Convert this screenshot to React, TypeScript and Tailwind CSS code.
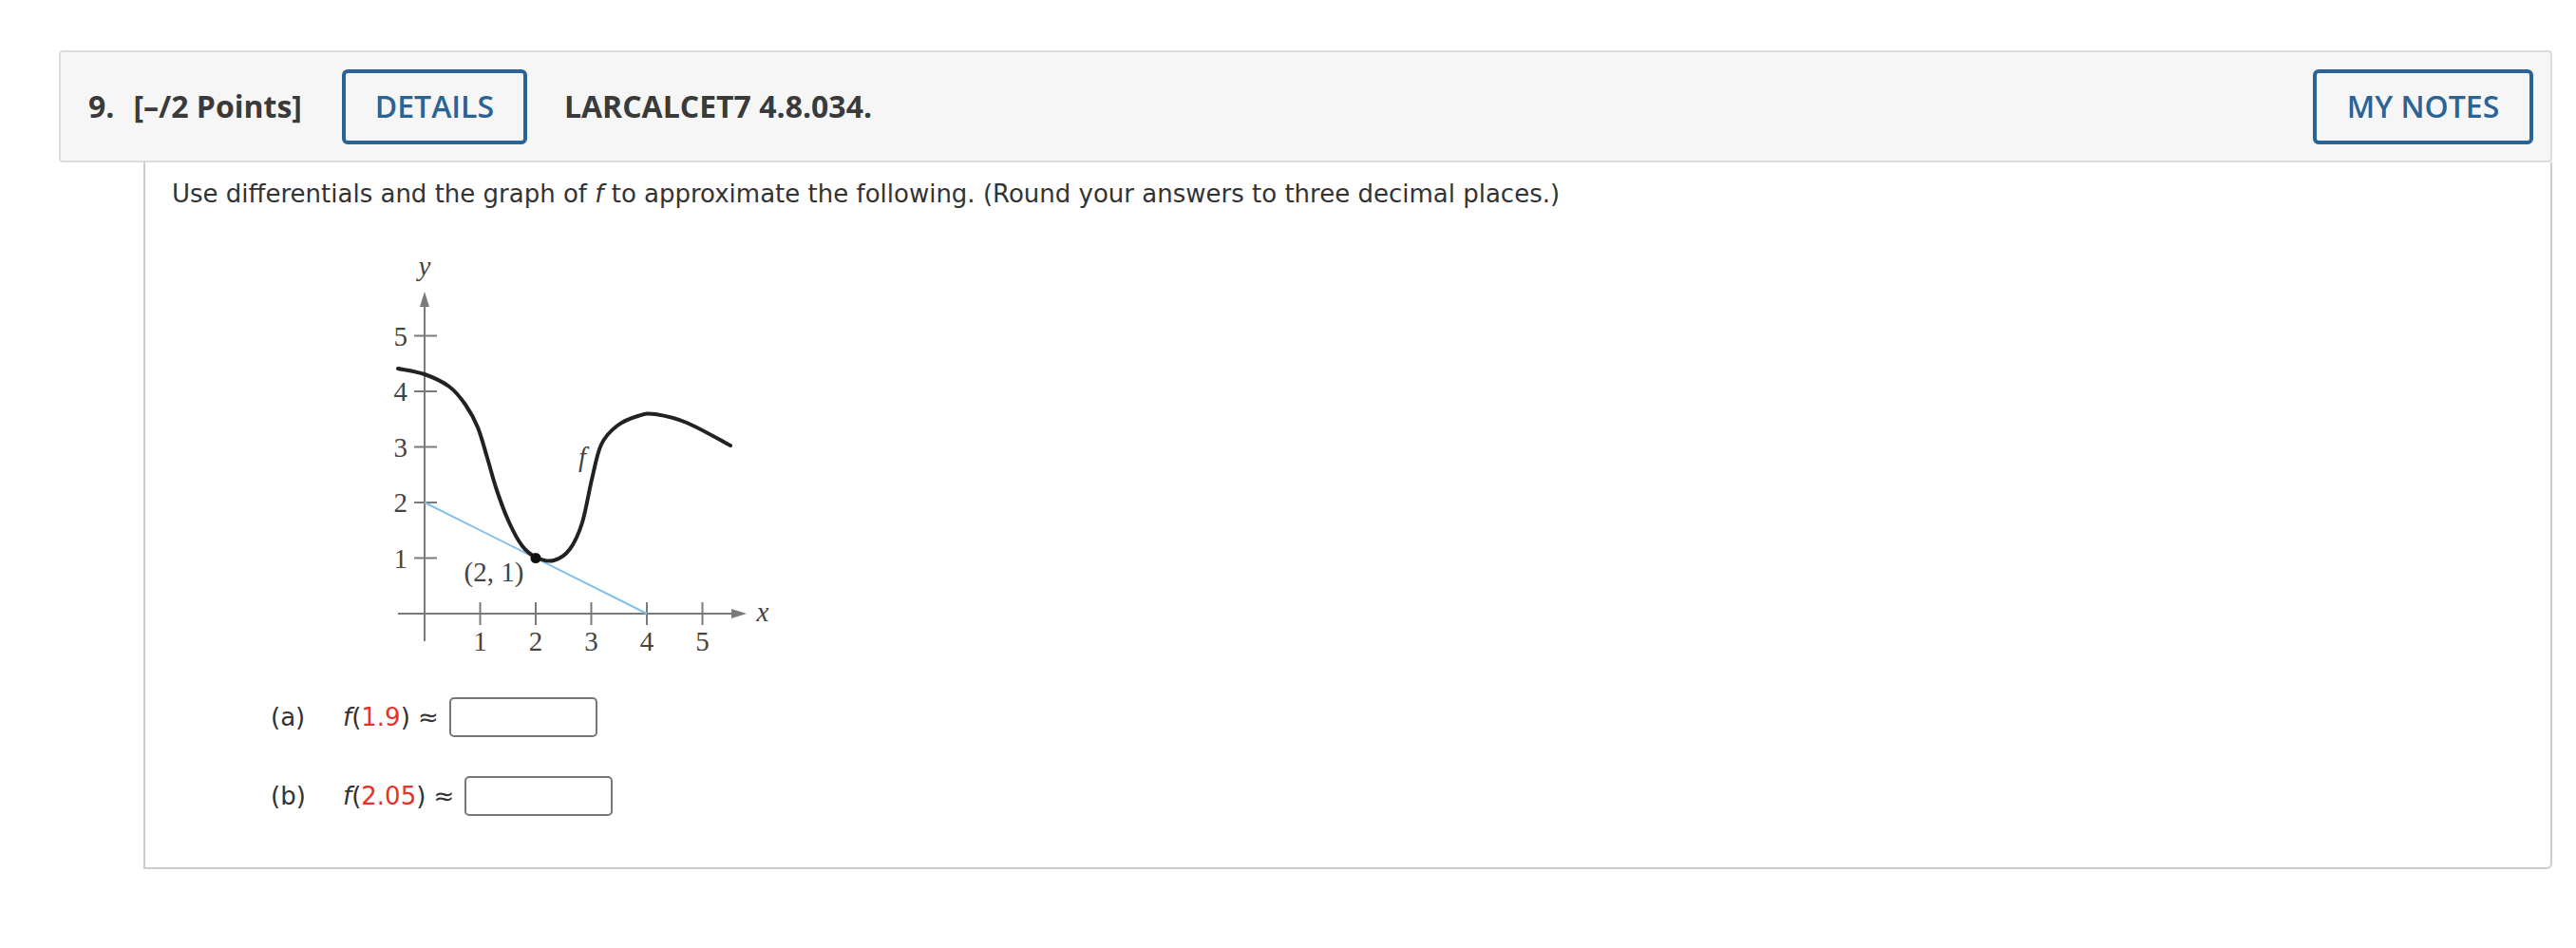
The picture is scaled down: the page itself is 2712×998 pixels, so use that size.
import React from "react";

const curvePts: [number, number][] = [
  [29, 128],
  [57, 134],
  [83, 147],
  [100, 166],
  [113, 190],
  [123, 222],
  [133, 256],
  [146, 290],
  [160, 315],
  [175, 327],
  [193, 330],
  [210, 318],
  [223, 290],
  [233, 245],
  [243, 208],
  [260, 188],
  [283, 177.5],
  [300, 176],
  [333, 185],
  [379, 209],
];

function smoothPath(pts: [number, number][]) {
  let d = `M${pts[0][0]},${pts[0][1]}`;
  for (let i = 0; i < pts.length - 1; i++) {
    const p0 = pts[i - 1] || pts[i];
    const p1 = pts[i];
    const p2 = pts[i + 1];
    const p3 = pts[i + 2] || p2;
    const c1x = p1[0] + (p2[0] - p0[0]) / 6;
    const c1y = p1[1] + (p2[1] - p0[1]) / 6;
    const c2x = p2[0] - (p3[0] - p1[0]) / 6;
    const c2y = p2[1] - (p3[1] - p1[1]) / 6;
    d += ` C${c1x.toFixed(1)},${c1y.toFixed(1)} ${c2x.toFixed(1)},${c2y.toFixed(1)} ${p2[0]},${p2[1]}`;
  }
  return d;
}

const X = (x: number) => 57 + 58.5 * x;
const Y = (y: number) => 386 - 58.5 * y;

function Graph() {
  const ticks = [1, 2, 3, 4, 5];
  return (
    <svg
      width={430}
      height={440}
      className="mt-[41px] ml-[237px] block"
      style={{ fontFamily: '"Liberation Serif", serif' }}
    >
      {/* axes */}
      <line x1={57} y1={60} x2={57} y2={415} stroke="#7a7a7a" strokeWidth={2} />
      <polygon points="57,47 52,63 62,63" fill="#7a7a7a" />
      <line x1={29} y1={386} x2={382} y2={386} stroke="#7a7a7a" strokeWidth={2} />
      <polygon points="396,386 380,381 380,391" fill="#7a7a7a" />
      {ticks.map((t) => (
        <g key={t}>
          <line x1={46} y1={Y(t)} x2={70} y2={Y(t)} stroke="#7a7a7a" strokeWidth={2} />
          <line x1={X(t)} y1={374} x2={X(t)} y2={398} stroke="#7a7a7a" strokeWidth={2} />
          <text x={39} y={Y(t) + 10} fontSize={29} fill="#444" textAnchor="end">
            {t}
          </text>
          <text x={X(t)} y={425} fontSize={29} fill="#444" textAnchor="middle">
            {t}
          </text>
        </g>
      ))}
      <text x={57} y={30} fontSize={29} fill="#444" fontStyle="italic" textAnchor="middle">
        y
      </text>
      <text x={413} y={394} fontSize={29} fill="#444" fontStyle="italic" textAnchor="middle">
        x
      </text>
      {/* tangent line */}
      <line x1={57} y1={Y(2)} x2={X(4)} y2={386} stroke="#84c0ea" strokeWidth={2} />
      {/* curve */}
      <path d={smoothPath(curvePts)} fill="none" stroke="#222" strokeWidth={4} strokeLinecap="round" />
      <circle cx={X(2)} cy={Y(1)} r={5.5} fill="#111" />
      <text x={223} y={231} fontSize={29} fill="#444" fontStyle="italic" textAnchor="middle">
        f
      </text>
      <text x={130} y={352} fontSize={29} fill="#444" textAnchor="middle">
        (2, 1)
      </text>
    </svg>
  );
}

function Answer({ label, arg }: { label: string; arg: string }) {
  return (
    <div className="flex h-[42px] items-center">
      <span className="w-[76px]">{label}</span>
      <span>
        <i>f</i>(<span className="text-[#e8312a]">{arg}</span>) ≈
      </span>
      <input
        type="text"
        className="ml-[11px] h-[42px] w-[156px] rounded-[5px] border-2 border-[#777] bg-white outline-none"
      />
    </div>
  );
}

export default function App() {
  return (
    <div className="min-h-screen bg-white pt-[53px] pl-[62px] pr-[25px]">
      <div
        className="flex h-[118px] items-center rounded-[4px] border-2 border-[#dcdcdc] bg-[#f6f6f6] pl-[29px] pr-[18px] text-[#3a3a3a]"
        style={{ fontFamily: '"Open Sans", sans-serif' }}
      >
        <span className="text-[32px] font-bold">9.</span>
        <span className="ml-[20px] text-[32px] font-bold">[–/2 Points]</span>
        <button className="ml-[42px] flex h-[79px] w-[195px] items-center justify-center rounded-[6px] border-4 border-[#2a6395] text-[32px] font-semibold text-[#2a6395]">
          DETAILS
        </button>
        <span className="ml-[39px] text-[32px] font-bold">LARCALCET7 4.8.034.</span>
        <button className="ml-auto flex h-[79px] w-[232px] items-center justify-center rounded-[6px] border-4 border-[#2a6395] text-[32px] font-semibold text-[#2a6395]">
          MY NOTES
        </button>
      </div>

      <div
        className="ml-[89px] rounded-br-[6px] border-x-2 border-b-2 border-[#cccccc] text-[26px] text-[#333]"
        style={{ fontFamily: '"DejaVu Sans", Verdana, sans-serif' }}
      >
        <p className="pt-[18px] pl-[28px] leading-[30px]">
          Use differentials and the graph of <i>f</i> to approximate the following. (Round your
          answers to three decimal places.)
        </p>
        <Graph />
        <div className="mt-[34px] flex flex-col gap-[41px] pb-[54px] pl-[132px]">
          <Answer label="(a)" arg="1.9" />
          <Answer label="(b)" arg="2.05" />
        </div>
      </div>
    </div>
  );
}
